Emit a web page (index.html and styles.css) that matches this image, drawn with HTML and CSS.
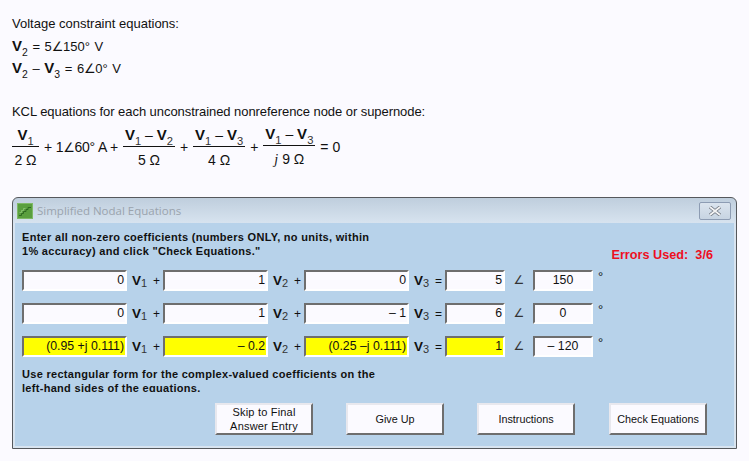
FILE: index.html
```html
<!DOCTYPE html>
<html lang="en">
<head>
<meta charset="utf-8">
<title>Simplified Nodal Equations</title>
<link rel="stylesheet" href="styles.css">
</head>
<body>
<section class="intro">
  <p class="line">Voltage constraint equations:</p>
  <p class="line math"><b>V</b><sub>2</sub> = 5<span class="ang">∠</span>150° V</p>
  <p class="line math"><b>V</b><sub>2</sub> – <b>V</b><sub>3</sub> = 6<span class="ang">∠</span>0° V</p>
  <p class="line kcl">KCL equations for each unconstrained nonreference node or supernode:</p>
  <div class="equation">
    <span class="frac f1"><span class="num"><b>V</b><sub>1</sub></span><span class="den">2 Ω</span></span>
    <span class="mid">+ 1<span class="ang">∠</span>60° A +</span>
    <span class="frac f2"><span class="num"><b>V</b><sub>1</sub> – <b>V</b><sub>2</sub></span><span class="den">5 Ω</span></span>
    <span>+</span>
    <span class="frac f3"><span class="num"><b>V</b><sub>1</sub> – <b>V</b><sub>3</sub></span><span class="den">4 Ω</span></span>
    <span>+</span>
    <span class="frac f4"><span class="num"><b>V</b><sub>1</sub> – <b>V</b><sub>3</sub></span><span class="den"><i class="j">j</i> 9 Ω</span></span>
    <span>= 0</span>
  </div>
</section>

<section class="window">
  <header class="titlebar">
    <svg class="app-icon" viewBox="0 0 16 16" aria-hidden="true">
      <rect x="0.5" y="0.5" width="15" height="15" fill="#5a9f3e" stroke="#7fb966"/>
      <path d="M2 12.500h2.500v-2h2v-2h2.500v-2h2v-2H14" fill="none" stroke="#2f6a22" stroke-width="1"/>
      <path d="M2.500 9.500h2v-2h2v-2h2" fill="none" stroke="#8fc77a" stroke-width="0.800"/>
    </svg>
    <span class="title">Simplified Nodal Equations</span>
    <span class="close">
      <svg viewBox="0 0 14 10" aria-hidden="true">
        <path d="M2 1 L12 9 M12 1 L2 9" stroke="#6f7680" stroke-width="3.400" fill="none"/>
        <path d="M2 1 L12 9 M12 1 L2 9" stroke="#f4f4f4" stroke-width="1.800" fill="none"/>
      </svg>
    </span>
  </header>
  <div class="panel">
    <div class="head">
      <p class="bold-note">Enter all non-zero coefficients (numbers ONLY, no units, within<br>1% accuracy) and click "Check Equations."</p>
      <p class="errors">Errors Used:&nbsp; 3/6</p>
    </div>
    <div class="grid">
      <span class="field">0</span><span class="term"><b>V</b><sub>1</sub><em>+</em></span>
      <span class="field">1</span><span class="term"><b>V</b><sub>2</sub><em>+</em></span>
      <span class="field">0</span><span class="term"><b>V</b><sub>3</sub><em>=</em></span>
      <span class="field">5</span><span class="sym">∠</span>
      <span class="field center">150</span><span class="deg">°</span>

      <span class="field">0</span><span class="term"><b>V</b><sub>1</sub><em>+</em></span>
      <span class="field">1</span><span class="term"><b>V</b><sub>2</sub><em>+</em></span>
      <span class="field">– 1</span><span class="term"><b>V</b><sub>3</sub><em>=</em></span>
      <span class="field">6</span><span class="sym">∠</span>
      <span class="field center">0</span><span class="deg">°</span>

      <span class="field bad">(0.95 +j 0.111)</span><span class="term"><b>V</b><sub>1</sub><em>+</em></span>
      <span class="field bad">– 0.2</span><span class="term"><b>V</b><sub>2</sub><em>+</em></span>
      <span class="field bad">(0.25 –j 0.111)</span><span class="term"><b>V</b><sub>3</sub><em>=</em></span>
      <span class="field bad">1</span><span class="sym">∠</span>
      <span class="field center">– 120</span><span class="deg">°</span>
    </div>
    <p class="bold-note clip">Use rectangular form for the complex-valued coefficients on the<br>left-hand sides of the equations.</p>
    <div class="buttons">
      <button class="btn two">Skip to Final<br>Answer Entry</button>
      <button class="btn">Give Up</button>
      <button class="btn">Instructions</button>
      <button class="btn last">Check Equations</button>
    </div>
  </div>
</section>
</body>
</html>
```

FILE: styles.css
```css
* { box-sizing: border-box; }
html, body { margin: 0; padding: 0; }
body {
  width: 749px;
  height: 461px;
  overflow: hidden;
  background: #fbfaff;
  color: #111;
  font-family: "Liberation Sans", Arial, sans-serif;
  font-size: 13px;
}
p { margin: 0; }
sub { font-size: 80%; line-height: 0; vertical-align: -0.45em; }
.intro { padding: 13px 0 0 12px; height: 197px; }
.line { height: 22px; line-height: 22px; white-space: nowrap; }
.math { word-spacing: 1px; }
.line b, .num b, .term b { font-weight: bold; font-size: 15px; }
.ang { font-family: "DejaVu Sans", sans-serif; font-size: 13px; letter-spacing: -0.5px; }
.kcl { margin-top: 22px; letter-spacing: -0.06px; }
.equation { display: flex; align-items: center; gap: 5px; height: 44px; padding-top: 4px; white-space: nowrap; font-size: 14px; }
.mid { letter-spacing: -0.2px; }
.frac { display: inline-flex; flex-direction: column; align-items: center; line-height: 16px; }
.num { display: block; width: 100%; text-align: center; border-bottom: 1px solid #111; padding-bottom: 3px; }
.den { display: block; padding-top: 5px; }
.num sub { color: #333; }
.f1 { width: 27px; }
.f2 { width: 52px; }
.f3 { width: 52px; }
.f4 { width: 52px; }
.j { font-family: "Liberation Serif", serif; }

.window {
  margin-left: 12px;
  width: 725px;
  height: 252px;
  border: 1px solid #55585c;
  border-radius: 6px 6px 0 0;
  padding: 0 2px 2px;
  background: linear-gradient(#bfcedd 0, #d8e4f0 26px, #d8e4f0 100%);
}
.titlebar { display: flex; align-items: center; height: 25px; padding-left: 2px; }
.app-icon { width: 16px; height: 16px; flex: none; }
.title { margin-left: 4px; color: #9aa3ad; font-family: "Open Sans", sans-serif; font-size: 11.5px; }
.close {
  margin-left: auto;
  margin-right: 3px;
  width: 32px;
  height: 18px;
  border: 1px solid #8d9cb3;
  border-radius: 2px;
  display: flex;
  align-items: center;
  justify-content: center;
  background: linear-gradient(#dbe4ee, #c7d4e2);
}
.close svg { width: 14px; height: 10px; }

.panel { height: 223px; background: #b7d2ea; padding: 0 0 0 7px; }
.head { display: flex; justify-content: space-between; height: 47px; padding: 7px 21px 0 0; }
.bold-note { font-weight: bold; font-size: 11px; line-height: 14px; letter-spacing: 0.3px; color: #111; }
.errors { color: #ee0f1f; font-weight: bold; font-size: 12.7px; margin-top: 18px; }

.grid {
  display: grid;
  grid-template-columns: 105px 36px 105px 36px 105px 36px 60px 28px 60px 20px;
  grid-auto-rows: 21px;
  row-gap: 12px;
  width: max-content;
}
.field {
  display: block;
  border-style: solid;
  border-width: 2px;
  border-color: #6e6e6e #fff #fff #6e6e6e;
  background: #fbfaff;
  text-align: right;
  padding-right: 1px;
  font-size: 12.3px;
  line-height: 17px;
  white-space: nowrap;
  overflow: hidden;
  color: #111;
}
.field.bad { background: #ffff00; }
.field.center { text-align: center; padding-right: 0; }
.term { display: flex; align-items: baseline; padding-left: 5px; line-height: 22px; font-size: 12px; }
.term b { font-size: 13.5px; }
.term sub { font-size: 11px; color: #333; line-height: 0; position: relative; top: 2px; }
.term em { font-style: normal; margin-left: auto; margin-right: 3px; font-weight: normal; }
.sym { text-align: center; font-family: "DejaVu Sans", sans-serif; font-size: 12px; line-height: 21px; color: #333; }
.deg { font-size: 13px; line-height: 13px; padding-left: 5px; }

.clip { margin-top: 10px; height: 25px; overflow: hidden; }
.buttons { display: flex; gap: 33px; margin: 11px 0 0 193px; }
.btn {
  width: 98px;
  height: 32px;
  padding: 0;
  border-style: solid;
  border-width: 2px;
  border-color: #e8e8ee #6e6e6e #6e6e6e #e8e8ee;
  background: #fbfaff;
  font-family: "Liberation Sans", sans-serif;
  font-size: 10.8px;
  line-height: 14px;
  color: #111;
}
.btn.two { font-size: 11px; letter-spacing: 0.2px; }
.btn.last { margin-left: 1px; }
```
